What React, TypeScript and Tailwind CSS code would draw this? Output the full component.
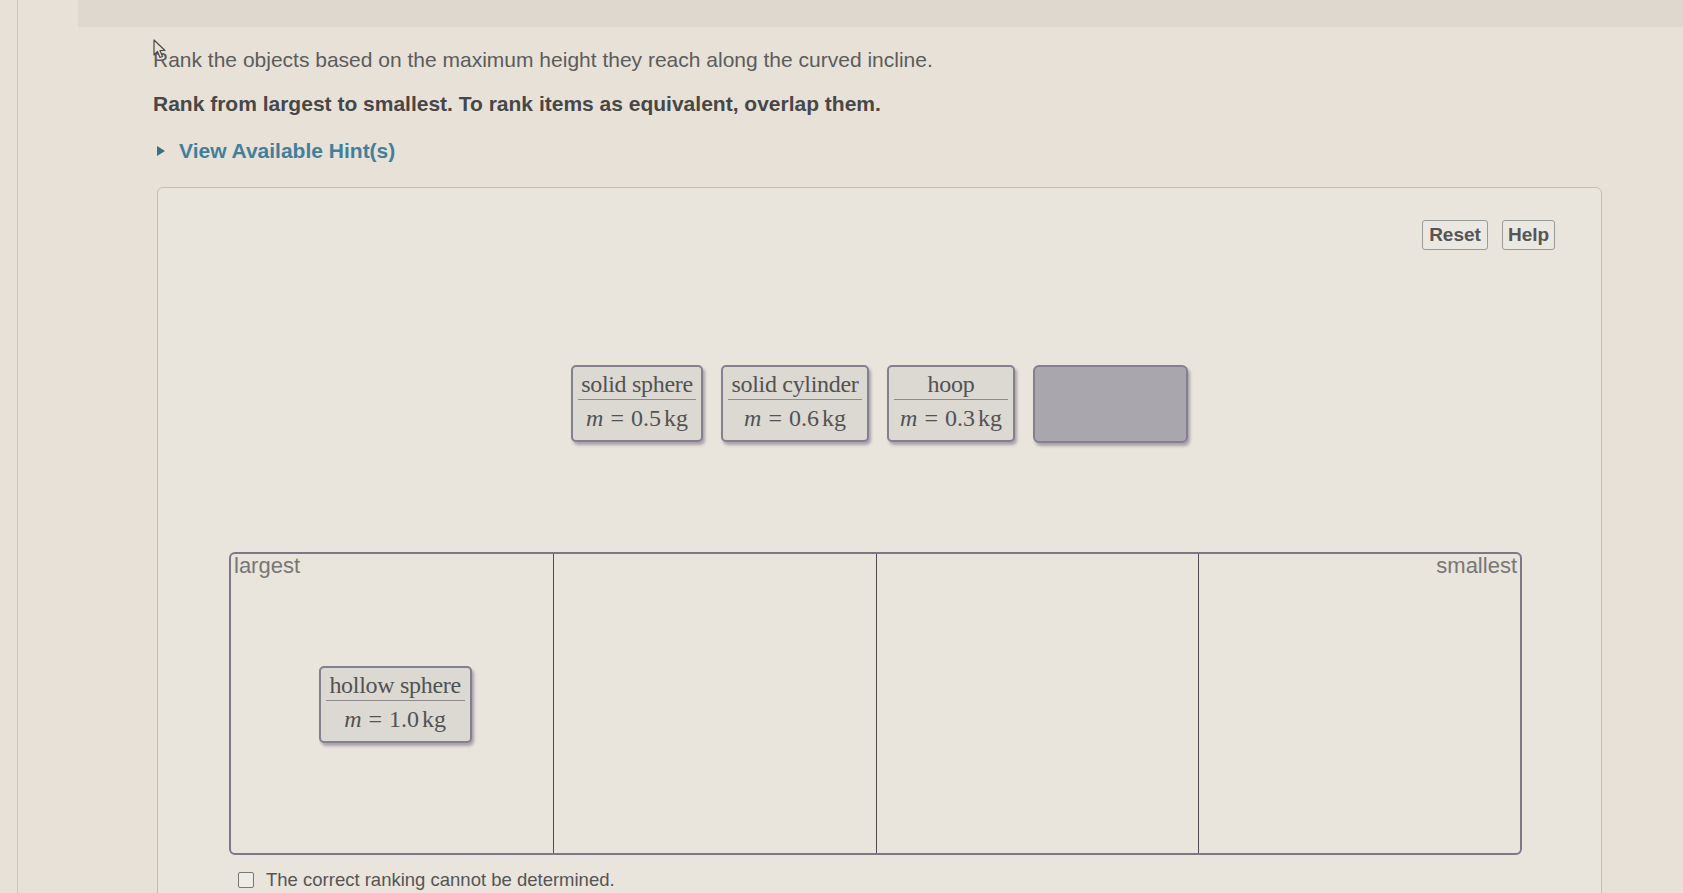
import React from "react";

interface Item {
  name: string;
  mass: string;
  w: string;
}

const pool: Item[] = [
  { name: "solid sphere", mass: "0.5", w: "w-[132px]" },
  { name: "solid cylinder", mass: "0.6", w: "w-[148px]" },
  { name: "hoop", mass: "0.3", w: "w-[128px]" },
];

function Tile({ name, mass, w }: Item) {
  return (
    <div
      className={`${w} h-[77px] shrink-0 rounded-[5px] border-2 border-[#858090] bg-[#dcd8d2] px-[5px] pt-[4px] shadow-[2px_3px_3px_rgba(90,80,110,0.45)] font-['Liberation_Serif',serif] text-[24px] text-[#525252]`}
    >
      <div className="whitespace-nowrap text-center leading-[26px] tracking-[-0.3px]">{name}</div>
      <div className="mt-[2px] h-px bg-[#8e8a8e]" />
      <div className="mt-[5px] whitespace-nowrap text-center leading-[26px]">
        <span className="italic">m</span>
        <span className="mx-[7px]">=</span>
        {mass}
        <span className="ml-[3px]">kg</span>
      </div>
    </div>
  );
}

function Cursor() {
  return (
    <svg className="absolute left-0 -top-[9px]" width="14" height="20" viewBox="0 0 14 20">
      <path d="M1 1 L1 16 L4.5 12.5 L7 18.5 L9.5 17.5 L7 11.5 L12 11.5 Z" fill="#e7e1d8" stroke="#4a4a4a" strokeWidth="1.2" strokeLinejoin="round" />
    </svg>
  );
}

export default function App() {
  return (
    <div className="h-[893px] w-full overflow-hidden bg-[#e7e1d8] font-['Liberation_Sans',Arial,sans-serif]">
      <div className="ml-[17px] h-full border-l border-[#cdc6bd]">
        <div className="ml-[60px] h-[27px] bg-[#ded8cf]" />
        <div className="pl-[135px] pt-[21px]">
          <p className="relative text-[21px] leading-[24px] text-[#5c5c5c]">
            <Cursor />
            Rank the objects based on the maximum height they reach along the curved incline.
          </p>
          <p className="mt-[20px] text-[21px] font-bold leading-[24px] text-[#474747]">
            Rank from largest to smallest. To rank items as equivalent, overlap them.
          </p>
          <div className="mt-[23px] flex items-center gap-[13px] leading-[24px]">
            <svg width="10" height="12" viewBox="0 0 10 12" className="ml-[3px]">
              <path d="M1 1 L9 6 L1 11 Z" fill="#3a6f86" />
            </svg>
            <span className="text-[21px] font-bold text-[#437f9b]">View Available Hint(s)</span>
          </div>

          <div className="ml-[4px] mt-[24px] h-[720px] w-[1445px] rounded-[6px] border border-[#c5beb5] bg-[#e9e4dc]">
            <div className="flex justify-end gap-[14px] pr-[46px] pt-[32px]">
              <button className="h-[30px] w-[66px] rounded-[3px] border border-[#9a9a9a] bg-[#ebe7e1] text-[19px] font-bold text-[#555]">
                Reset
              </button>
              <button className="h-[30px] w-[53px] rounded-[3px] border border-[#9a9a9a] bg-[#ebe7e1] text-[19px] font-bold text-[#555]">
                Help
              </button>
            </div>

            <div className="mt-[115px] flex justify-center gap-[18px]">
              {pool.map((it) => (
                <Tile key={it.name} {...it} />
              ))}
              <div className="h-[78px] w-[155px] rounded-[6px] border-2 border-[#858090] bg-[#a9a6ae] shadow-[2px_3px_3px_rgba(90,80,110,0.45)]" />
            </div>

            <div className="ml-[71px] mt-[109px] grid h-[303px] w-[1293px] grid-cols-4 rounded-[6px] border-2 border-[#7d7787]">
              <div className="flex flex-col">
                <div className="h-[24px] pl-[3px] text-[22px] leading-[24px] text-[#777]">largest</div>
                <div className="flex flex-1 items-center justify-center pb-[22px] pl-[6px]">
                  <Tile name="hollow sphere" mass="1.0" w="w-[153px]" />
                </div>
              </div>
              <div className="border-l border-[#4e4b52]" />
              <div className="border-l border-[#4e4b52]" />
              <div className="border-l border-[#4e4b52]">
                <div className="h-[24px] pr-[3px] text-right text-[22px] leading-[24px] text-[#777]">smallest</div>
              </div>
            </div>

            <label className="ml-[80px] mt-[16px] flex items-center gap-[12px]">
              <span className="h-[16px] w-[16px] rounded-[2px] border-[1.5px] border-[#777] bg-[#efebe5]" />
              <span className="text-[18.5px] leading-[18px] text-[#555]">The correct ranking cannot be determined.</span>
            </label>
          </div>
        </div>
      </div>
    </div>
  );
}
